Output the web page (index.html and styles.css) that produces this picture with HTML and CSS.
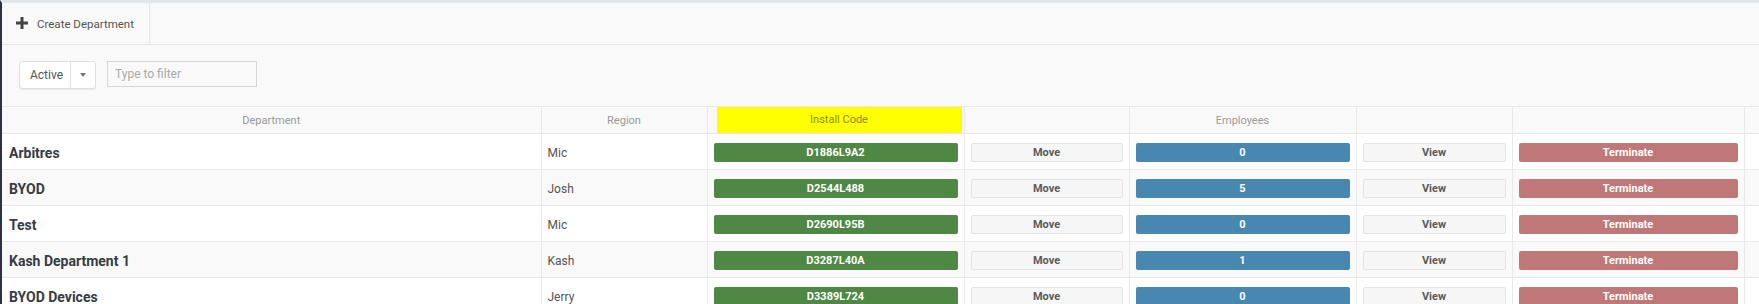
FILE: index.html
```html
<!DOCTYPE html>
<html>
<head>
<meta charset="utf-8">
<link rel="stylesheet" href="styles.css">
</head>
<body>
<div class="app">
  <div class="toolbar">
    <button class="create">
      <svg class="plus" width="12" height="12" viewBox="0 0 12 12"><rect x="4.5" y="0" width="3" height="12" fill="#444"/><rect x="0" y="4.5" width="12" height="3" fill="#444"/></svg>
      <span>Create Department</span>
    </button>
  </div>
  <div class="filters">
    <div class="select">
      <span class="select-label">Active</span>
      <span class="select-caret"><span class="caret"></span></span>
    </div>
    <input class="filter-input" type="text" placeholder="Type to filter">
  </div>
  <table class="grid">
    <colgroup>
      <col class="c1"><col class="c2"><col class="c3"><col class="c4"><col class="c5"><col class="c6"><col class="c7"><col class="c8">
    </colgroup>
    <thead>
      <tr>
        <th>Department</th>
        <th>Region</th>
        <th class="hl-cell"><div class="hl">Install Code</div></th>
        <th></th>
        <th>Employees</th>
        <th></th>
        <th></th>
        <th></th>
      </tr>
    </thead>
    <tbody>
      <tr>
        <td class="dept">Arbitres</td><td class="region">Mic</td>
        <td class="bc"><span class="btn green">D1886L9A2</span></td>
        <td class="bc"><span class="btn plain">Move</span></td>
        <td class="bc"><span class="btn blue">0</span></td>
        <td class="bc"><span class="btn plain">View</span></td>
        <td class="bc"><span class="btn red">Terminate</span></td>
        <td></td>
      </tr>
      <tr class="alt">
        <td class="dept">BYOD</td><td class="region">Josh</td>
        <td class="bc"><span class="btn green">D2544L488</span></td>
        <td class="bc"><span class="btn plain">Move</span></td>
        <td class="bc"><span class="btn blue">5</span></td>
        <td class="bc"><span class="btn plain">View</span></td>
        <td class="bc"><span class="btn red">Terminate</span></td>
        <td></td>
      </tr>
      <tr>
        <td class="dept">Test</td><td class="region">Mic</td>
        <td class="bc"><span class="btn green">D2690L95B</span></td>
        <td class="bc"><span class="btn plain">Move</span></td>
        <td class="bc"><span class="btn blue">0</span></td>
        <td class="bc"><span class="btn plain">View</span></td>
        <td class="bc"><span class="btn red">Terminate</span></td>
        <td></td>
      </tr>
      <tr class="alt">
        <td class="dept">Kash Department 1</td><td class="region">Kash</td>
        <td class="bc"><span class="btn green">D3287L40A</span></td>
        <td class="bc"><span class="btn plain">Move</span></td>
        <td class="bc"><span class="btn blue">1</span></td>
        <td class="bc"><span class="btn plain">View</span></td>
        <td class="bc"><span class="btn red">Terminate</span></td>
        <td></td>
      </tr>
      <tr>
        <td class="dept">BYOD Devices</td><td class="region">Jerry</td>
        <td class="bc"><span class="btn green">D3389L724</span></td>
        <td class="bc"><span class="btn plain">Move</span></td>
        <td class="bc"><span class="btn blue">0</span></td>
        <td class="bc"><span class="btn plain">View</span></td>
        <td class="bc"><span class="btn red">Terminate</span></td>
        <td></td>
      </tr>
    </tbody>
  </table>
</div>
</body>
</html>
```
FILE: styles.css
```css
html, body {
  margin: 0;
  padding: 0;
  background: #f9f9f9;
  font-family: Roboto, "Liberation Sans", Arial, sans-serif;
  overflow: hidden;
}
.app {
  border-left: 2px solid #2d3242;
  border-top: 3px solid #e3e6ed;
  min-height: 301px;
  background: #f9f9f9;
}
.toolbar {
  height: 41px;
  border-bottom: 1px solid #e6e6e6;
  display: flex;
}
.create {
  display: flex;
  align-items: center;
  height: 41px;
  padding: 0 15px 0 14px;
  margin: 0;
  border: 0;
  border-right: 1px solid #e6e6e6;
  background: #f9f9f9;
  font-family: Roboto, "Liberation Sans", Arial, sans-serif;
  font-size: 11.5px;
  color: #555;
  gap: 9px;
}
.plus { display: block; margin-top: -1px; }
.filters {
  height: 61px;
  box-sizing: border-box;
  padding: 16px 0 0 17px;
  display: flex;
  align-items: flex-start;
  gap: 11px;
}
.select {
  display: flex;
  height: 28px;
  width: 77px;
  box-sizing: border-box;
  border: 1px solid #dedede;
  border-radius: 3px;
  background: #fff;
  box-shadow: 0 1px 1px rgba(0,0,0,0.06);
}
.select-label {
  width: 51px;
  box-sizing: border-box;
  padding-left: 10px;
  border-right: 1px solid #e0e0e0;
  font-size: 12px;
  color: #555;
  line-height: 26px;
}
.select-caret {
  flex: 1;
  display: flex;
  align-items: center;
  justify-content: center;
}
.caret {
  width: 0; height: 0;
  border-left: 3px solid transparent;
  border-right: 3px solid transparent;
  border-top: 4px solid #777;
}
.filter-input {
  width: 150px;
  height: 26px;
  box-sizing: border-box;
  border: 1px solid #d6d6d6;
  background: #f9f9f9;
  margin: 0;
  padding: 0 7px;
  font-family: Roboto, "Liberation Sans", Arial, sans-serif;
  font-size: 12px;
  color: #555;
  outline: none;
}
.filter-input::placeholder { color: #aaa; }
.grid {
  width: 1757px;
  table-layout: fixed;
  border-collapse: collapse;
  border-spacing: 0;
}
.c1 { width: 539px; }
.c2 { width: 166px; }
.c3 { width: 257px; }
.c4 { width: 165px; }
.c5 { width: 227px; }
.c6 { width: 156px; }
.c7 { width: 232px; }
.c8 { width: 15px; }
.grid th {
  height: 26px;
  padding: 0;
  background: #f9f9f9;
  border: 1px solid #e8e8e8;
  border-left: 0;
  font-weight: 400;
  font-size: 11px;
  color: #9a9a9a;
  text-align: center;
  vertical-align: middle;
}
.grid th.hl-cell { padding: 0 2px 0 9px; }
.hl {
  background: #ffff00;
  color: #8c8c2a;
  height: 26px;
  line-height: 26px;
}
.grid td {
  height: 36px;
  box-sizing: border-box;
  padding: 0;
  border: 1px solid #e8e8e8;
  border-left: 0;
  background: #fff;
  vertical-align: middle;
}
.grid tr.alt td { background: #f9f9f9; }
.grid td.dept {
  padding: 3px 0 0 7px;
  font-weight: 700;
  font-size: 14px;
  color: #363b44;
}
.grid td.region {
  padding: 3px 0 0 6px;
  font-size: 12px;
  color: #555;
}
.grid td.bc { padding: 0 6px; }
.btn {
  display: block;
  height: 19px;
  margin-top: 2px;
  line-height: 19px;
  box-sizing: border-box;
  border-radius: 2px;
  text-align: center;
  font-size: 11px;
  font-weight: 700;
  color: #fff;
}
.btn.green { background: #4f8744; }
.btn.blue { background: #4887b0; }
.btn.red { background: #c07777; }
.btn.plain {
  background: #f6f6f6;
  border: 1px solid #e4e4e4;
  color: #5a5a5a;
  line-height: 17px;
}
```
